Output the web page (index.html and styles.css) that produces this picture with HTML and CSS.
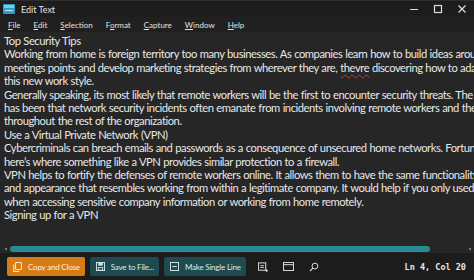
FILE: index.html
```html
<!DOCTYPE html>
<html lang="en">
<head>
    <meta charset="UTF-8">
    <title>Edit Text</title>
    <link rel="stylesheet" href="styles.css">
</head>
<body>
    <div class="window">
        <div class="titlebar">
            <div class="app-title">
                <svg class="app-icon" width="12" height="10" viewBox="0 0 12 10">
                    <rect x="0" y="0" width="12" height="10" rx="1" fill="#2d9fc7"/>
                    <rect x="1" y="1" width="10" height="3" fill="#6fd0ee"/>
                    <rect x="2" y="6" width="8" height="1" fill="#bfeefa"/>
                </svg>
                <span>Edit Text</span>
            </div>
            <div class="win-controls">
                <span class="ctl">
                    <svg width="10" height="10" viewBox="0 0 10 10"><path d="M1 5.5H9" stroke="#ddd" stroke-width="1"/></svg>
                </span>
                <span class="ctl">
                    <svg width="10" height="10" viewBox="0 0 10 10"><rect x="1.5" y="1.5" width="7" height="7" fill="none" stroke="#ddd" stroke-width="1.2"/></svg>
                </span>
                <span class="ctl">
                    <svg width="10" height="10" viewBox="0 0 10 10"><path d="M1.5 1.5L8.5 8.5M8.5 1.5L1.5 8.5" stroke="#ddd" stroke-width="1.2"/></svg>
                </span>
            </div>
        </div>

        <div class="menubar">
            <span><u>F</u>ile</span>
            <span><u>E</u>dit</span>
            <span><u>S</u>election</span>
            <span>F<u>o</u>rmat</span>
            <span><u>C</u>apture</span>
            <span><u>W</u>indow</span>
            <span><u>H</u>elp</span>
        </div>

        <div class="editor">
            <div class="line">Top Security Tips</div>
            <div class="line">Working from home is foreign territory too many businesses. As companies learn how to build ideas around</div>
            <div class="line">meetings points and develop marketing strategies from wherever they are, <span class="typo">thevre</span> discovering how to adapt to</div>
            <div class="line">this new work style.</div>
            <div class="line">Generally speaking, its most likely that remote workers will be the first to encounter security threats. The trend</div>
            <div class="line">has been that network security incidents often emanate from incidents involving remote workers and then spread</div>
            <div class="line">throughout the rest of the organization.</div>
            <div class="line">Use a Virtual Private Network (VPN)</div>
            <div class="line">Cybercriminals can breach emails and passwords as a consequence of unsecured home networks. Fortunately,</div>
            <div class="line">here’s where something like a VPN provides similar protection to a firewall.</div>
            <div class="line">VPN helps to fortify the defenses of remote workers online. It allows them to have the same functionality, security</div>
            <div class="line">and appearance that resembles working from within a legitimate company. It would help if you only used it</div>
            <div class="line">when accessing sensitive company information or working from home remotely.</div>
            <div class="line">Signing up for a VPN</div>
        </div>

        <div class="hscroll">
            <span class="dot"></span>
            <div class="thumb"></div>
            <span class="dot"></span>
        </div>

        <div class="footer">
            <button class="btn btn-primary">
                <svg width="9" height="10" viewBox="0 0 9 10"><rect x="2.5" y="0.5" width="6" height="7" rx="1" fill="none" stroke="#fbe3c5" stroke-width="1.1"/><path d="M0.8 2.5v7h5.5" fill="none" stroke="#fbe3c5" stroke-width="1.1"/></svg>
                Copy and Close
            </button>
            <button class="btn">
                <svg width="9" height="9" viewBox="0 0 10 10"><rect x="0.5" y="0.5" width="9" height="9" fill="none" stroke="#d5e6e8" stroke-width="1.1"/><rect x="2.5" y="1" width="5" height="3" fill="#d5e6e8"/><rect x="2.5" y="6" width="5" height="3" fill="none" stroke="#d5e6e8" stroke-width="0.9"/></svg>
                Save to File...
            </button>
            <button class="btn">
                <svg width="9" height="9" viewBox="0 0 10 10"><rect x="0.5" y="0.5" width="9" height="9" fill="none" stroke="#d5e6e8" stroke-width="1.1"/><path d="M2.5 5h5" stroke="#d5e6e8" stroke-width="1.1"/></svg>
                Make Single Line
            </button>
            <div class="tools">
                <svg width="10" height="10" viewBox="0 0 11 11"><rect x="0.5" y="1" width="8" height="8" fill="none" stroke="#ddd" stroke-width="1.1"/><path d="M2.5 4h4M2.5 6h4" stroke="#ddd" stroke-width="1"/><path d="M9.5 8v3M8 9.5h3" stroke="#ddd" stroke-width="1"/></svg>
                <svg width="11" height="9" viewBox="0 0 12 10"><rect x="0.5" y="0.5" width="11" height="9" fill="none" stroke="#ddd" stroke-width="1.1"/><path d="M0.5 3h11" stroke="#ddd" stroke-width="1.1"/></svg>
                <svg width="10" height="10" viewBox="0 0 11 11"><circle cx="6.5" cy="4.5" r="3.2" fill="none" stroke="#ddd" stroke-width="1.1"/><path d="M4.2 6.8L1 10" stroke="#ddd" stroke-width="1.3"/></svg>
            </div>
            <span class="status">Ln 4, Col 20</span>
        </div>
    </div>
</body>
</html>
```

FILE: styles.css
```css
* {
    margin: 0;
    padding: 0;
    box-sizing: border-box;
}

body {
    background: #1b1b1b;
    width: 474px;
    height: 280px;
    overflow: hidden;
    font-family: Lato, "Open Sans", sans-serif;
    color: #e8e8e8;
}

.window {
    display: flex;
    flex-direction: column;
    height: 280px;
}

.titlebar {
    display: flex;
    align-items: center;
    justify-content: space-between;
    height: 17px;
    background: #1d1d1d;
    border-top: 1px solid #2e2e2e;
}

.app-title {
    display: flex;
    align-items: center;
    gap: 6px;
    padding-left: 3px;
    font-size: 9px;
    color: #e4e4e4;
}

.win-controls {
    display: flex;
    height: 100%;
}

.ctl {
    width: 24px;
    display: flex;
    align-items: center;
    justify-content: center;
}

.menubar {
    display: flex;
    height: 15px;
    align-items: center;
    background: #202020;
    font-size: 8px;
    color: #e0e0e0;
    padding-left: 8px;
}

.menubar span {
    margin-right: 13px;
}

.menubar u {
    text-decoration-thickness: 1px;
    text-underline-offset: 1px;
}

.editor {
    flex: 1;
    background: #262626;
    padding: 2px 0 0 4px;
    font-size: 11.2px;
    letter-spacing: -0.45px;
    word-spacing: 0.4px;
    line-height: 13.4px;
    overflow: hidden;
}

.line {
    white-space: nowrap;
}

.typo {
    text-decoration: underline wavy #c0392b;
    text-decoration-thickness: 1px;
    text-underline-offset: 2px;
}

.hscroll {
    display: flex;
    align-items: center;
    height: 9px;
    background: #262626;
    padding: 0 3px 0 5px;
    gap: 3px;
}

.thumb {
    width: 420px;
    height: 6px;
    border-radius: 3px;
    background: #2a8c93;
}

.dot {
    width: 2px;
    height: 2px;
    background: #777;
}

.hscroll .dot:last-child {
    margin-left: auto;
}

.footer {
    display: flex;
    align-items: center;
    height: 27px;
    background: #1c1c1c;
    padding: 0 8px 0 7px;
    gap: 5px;
}

.btn {
    display: flex;
    align-items: center;
    gap: 6px;
    height: 19px;
    padding: 0 5px 0 6px;
    border: none;
    border-radius: 2px;
    background: #1e4b50;
    color: #dfe9ea;
    font-family: Lato, "Open Sans", sans-serif;
    font-size: 8px;
    letter-spacing: -0.2px;
}

.btn-primary {
    background: #d77c12;
    color: #fdf0e0;
}

.tools {
    display: flex;
    align-items: center;
    gap: 15px;
    margin-left: 7px;
}

.status {
    margin-left: auto;
    font-family: "DejaVu Sans Mono", monospace;
    font-size: 8.5px;
    font-weight: bold;
    color: #e6e6e6;
}
```
